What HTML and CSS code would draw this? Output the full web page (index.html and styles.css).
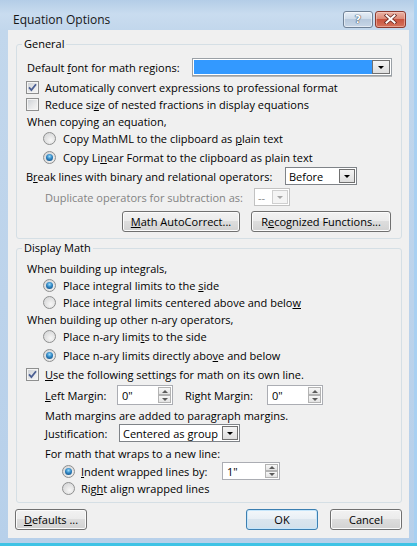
FILE: index.html
```html
<!DOCTYPE html>
<html>
<head>
<meta charset="utf-8">
<title>Equation Options</title>
<link rel="stylesheet" href="styles.css">
</head>
<body>
<div class="window">
  <div class="titlebar">
    <span class="title">Equation Options</span>
    <div class="caption">
      <span class="cbtn help"><span class="qmark">?</span></span>
      <span class="cbtn close">
        <svg width="13" height="10" viewBox="0 0 13 10"><path d="M2.5 1.5 L10.5 8.5 M10.5 1.5 L2.5 8.5" stroke="#6e2a22" stroke-width="3.6" stroke-linecap="square"/><path d="M2.5 1.5 L10.5 8.5 M10.5 1.5 L2.5 8.5" stroke="#ffffff" stroke-width="2" stroke-linecap="square"/></svg>
      </span>
    </div>
  </div>
  <div class="client">
    <fieldset class="group general">
      <legend>General</legend>
      <div class="row in-lbl mt6">
        <span class="lbl w-font">Default <u>f</u>ont for math regions:</span>
        <span class="combo font-combo"><span class="val hl"></span><span class="arrow"><i class="tri"></i></span></span>
      </div>
      <div class="row in-chk mt2">
        <span class="chk"><svg width="9" height="9" viewBox="0 0 9 9"><path d="M1 4.3 L3.4 7 L8 1.2" fill="none" stroke="#4b5f93" stroke-width="1.8"/></svg></span>
        <span>Automatically convert expressions to professional format</span>
      </div>
      <div class="row in-chk h17">
        <span class="chk"></span>
        <span>Reduce si<u>z</u>e of nested fractions in display equations</span>
      </div>
      <div class="row in-lbl h16"><span>When copying an equation,</span></div>
      <div class="row in-rad">
        <span class="rad"></span>
        <span>Copy MathML to the clipboard as <u>p</u>lain text</span>
      </div>
      <div class="row in-rad mt1">
        <span class="rad on"><i class="dot"></i></span>
        <span>Copy Li<u>n</u>ear Format to the clipboard as plain text</span>
      </div>
      <div class="row in-lbl2 mt1">
        <span class="lbl w-break">B<u>r</u>eak lines with binary and relational operators:</span>
        <span class="combo w-before"><span class="val">Before</span><span class="arrow"><i class="tri"></i></span></span>
      </div>
      <div class="row in-sub mt3 disabled">
        <span class="lbl w-dup">Duplicate operators for subtraction as:</span>
        <span class="combo w-dash off"><span class="val">--</span><span class="arrow"><i class="tri"></i></span></span>
      </div>
      <div class="row h21 mt5 btnrow">
        <span class="btn w-mac"><u>M</u>ath AutoCorrect...</span>
        <span class="btn w-rec">R<u>e</u>cognized Functions...</span>
      </div>
    </fieldset>

    <fieldset class="group display">
      <legend>Display Math</legend>
      <div class="row in-lbl h16 mt4"><span>When building up integrals,</span></div>
      <div class="row in-rad">
        <span class="rad on"><i class="dot"></i></span>
        <span>Place integral limits to the <u>s</u>ide</span>
      </div>
      <div class="row in-rad h17">
        <span class="rad"></span>
        <span>Place integral limits centered above and belo<u>w</u></span>
      </div>
      <div class="row in-lbl h16"><span>When building up other n-ary operators,</span></div>
      <div class="row in-rad">
        <span class="rad"></span>
        <span>Place n-ary limi<u>t</u>s to the side</span>
      </div>
      <div class="row in-rad mt1">
        <span class="rad on"><i class="dot"></i></span>
        <span>Place n-ary limits directly abo<u>v</u>e and below</span>
      </div>
      <div class="row in-chk mt1">
        <span class="chk"><svg width="9" height="9" viewBox="0 0 9 9"><path d="M1 4.3 L3.4 7 L8 1.2" fill="none" stroke="#4b5f93" stroke-width="1.8"/></svg></span>
        <span><u>U</u>se the following settings for math on its own line.</span>
      </div>
      <div class="row in-sub h20 mt2">
        <span class="lbl w-left"><u>L</u>eft Margin:</span>
        <span class="spin w-spin"><span class="val">0"</span><span class="spbtns"><span class="sp"><i class="up"></i></span><span class="sp"><i class="dn"></i></span></span></span>
        <span class="lbl w-right">Ri<u>g</u>ht Margin:</span>
        <span class="spin w-spin"><span class="val">0"</span><span class="spbtns"><span class="sp"><i class="up"></i></span><span class="sp"><i class="dn"></i></span></span></span>
      </div>
      <div class="row in-sub h16 mt2"><span>Math margins are added to paragraph margins.</span></div>
      <div class="row in-sub mt1">
        <span class="lbl w-just"><u>J</u>ustification:</span>
        <span class="combo w-group"><span class="val">Centered as group</span><span class="arrow"><i class="tri"></i></span></span>
      </div>
      <div class="row in-sub h16 mt3"><span>For math that wraps to a new line:</span></div>
      <div class="row in-rad2 mt1">
        <span class="rad on"><i class="dot"></i></span>
        <span class="lbl w-indent"><u>I</u>ndent wrapped lines by:</span>
        <span class="spin w-spin2 h18"><span class="val">1"</span><span class="spbtns"><span class="sp"><i class="up"></i></span><span class="sp"><i class="dn"></i></span></span></span>
      </div>
      <div class="row in-rad2 h17">
        <span class="rad"></span>
        <span>Rig<u>h</u>t align wrapped lines</span>
      </div>
    </fieldset>

    <div class="footer">
      <span class="btn w-foot"><u>D</u>efaults ...</span>
      <span class="btn w-foot default ok">OK</span>
      <span class="btn w-foot">Cancel</span>
    </div>
  </div>
  <div class="bottom-edge"></div>
</div>
</body>
</html>
```

FILE: styles.css
```css
html, body {
  margin: 0;
  padding: 0;
}

body {
  font-family: "Open Sans", "Noto Sans", sans-serif;
  font-size: 11px;
  color: #000;
  background: #b9d0e8;
}

u {
  text-decoration: underline;
  text-underline-offset: 1px;
}

.window {
  width: 417px;
  height: 546px;
  display: flex;
  flex-direction: column;
  background: linear-gradient(180deg, #b4cde7 0px, #c9dcef 14px, #c2d7ec 30px, #bcd3eb 300px, #b7d0ea 100%);
  box-shadow: inset -3px 0 0 #a8d0f2;
  overflow: hidden;
}

.titlebar {
  height: 30px;
  flex: none;
  box-sizing: border-box;
  padding: 8px 11px 0 13px;
  display: flex;
  align-items: center;
}

.title {
  font-size: 12px;
  color: #161616;
}

.caption {
  margin-left: auto;
  display: flex;
  gap: 2px;
}

.cbtn {
  height: 17px;
  box-sizing: border-box;
  border: 1px solid #6f8196;
  border-radius: 3px;
  display: flex;
  align-items: center;
  justify-content: center;
}

.help {
  width: 30px;
  background: linear-gradient(180deg, #e6eef7 0%, #cfdcea 45%, #b7c9dd 50%, #c7d6e7 100%);
  box-shadow: inset 0 0 0 1px rgba(255,255,255,0.5);
}

.qmark {
  font-family: "DejaVu Sans", sans-serif;
  font-weight: bold;
  font-size: 11px;
  line-height: 11px;
  color: #fff;
  text-shadow: 0 0 1px #3f4f63, 0 0 1px #3f4f63, 0 0 1px #3f4f63;
}

.close {
  width: 31px;
  border-color: #8b3a2f;
  background: linear-gradient(180deg, #eab3a5 0%, #dc8b78 45%, #c9543f 50%, #d5735c 100%);
  box-shadow: inset 0 0 0 1px rgba(255,220,210,0.45);
}

.client {
  margin: 0 8px;
  height: 508px;
  flex: none;
  background: #f0f0f0;
  display: flex;
  flex-direction: column;
}

.group {
  border: 1px solid #d5dfe5;
  border-radius: 3px;
  margin: 6px 7px 0 8px;
  padding: 0 0 6px 0;
  min-width: 0;
}

.group.display {
  margin-top: 1px;
  padding-bottom: 5px;
}

.group legend {
  padding: 0 2px;
  margin-left: 5px;
  line-height: 16px;
}

.row {
  display: flex;
  align-items: center;
  height: 18px;
  white-space: nowrap;
}

.h16 { height: 16px; }
.h17 { height: 17px; }
.h20 { height: 20px; }
.h21 { height: 21px; }

.mt1 { margin-top: 1px; }
.mt2 { margin-top: 2px; }
.mt3 { margin-top: 3px; }
.mt4 { margin-top: 4px; }
.mt5 { margin-top: 5px; }
.mt6 { margin-top: 6px; }

.in-lbl { padding-left: 10px; }
.in-lbl2 { padding-left: 9px; }
.in-chk { padding-left: 9px; }
.in-rad { padding-left: 26px; }
.in-sub { padding-left: 28px; }
.in-rad2 { padding-left: 45px; }

.lbl { flex: none; }
.w-font { width: 165px; }
.w-break { width: 259px; }
.w-dup { width: 209px; }
.w-left { width: 72px; }
.w-right { width: 82px; margin-left: 12px; }
.w-just { width: 74px; }
.w-indent { width: 141px; }

.disabled { color: #838383; }

/* checkbox */
.chk {
  width: 13px;
  height: 13px;
  flex: none;
  box-sizing: border-box;
  border: 1px solid #8e8f8f;
  background: linear-gradient(135deg, #cbcfd4 0%, #e9eaeb 60%, #f6f6f6 100%);
  box-shadow: inset 0 0 0 1px #f4f4f4;
  margin-right: 6px;
  display: flex;
  align-items: center;
  justify-content: center;
}

/* radio */
.rad {
  width: 13px;
  height: 13px;
  flex: none;
  box-sizing: border-box;
  border: 1px solid #8e8f8f;
  border-radius: 50%;
  background: radial-gradient(circle at 60% 65%, #f7f7f7 0%, #e4e4e4 45%, #cfd1d4 100%);
  margin-right: 7px;
  display: flex;
  align-items: center;
  justify-content: center;
}

.in-rad2 .rad { margin-right: 6px; }

.dot {
  display: block;
  width: 7px;
  height: 7px;
  border-radius: 50%;
  background: radial-gradient(circle at 50% 35%, #9bdcfb 0%, #2f86c4 45%, #0e4272 100%);
}

/* combo box */
.combo {
  display: flex;
  height: 18px;
  flex: none;
  box-sizing: border-box;
  border: 1px solid #7f8388;
  background: #fff;
}

.combo .val {
  flex: 1;
  padding-left: 3px;
  display: flex;
  align-items: center;
  overflow: hidden;
}

.combo .val.hl {
  background: #3399ff;
  margin: 1px 0 1px 1px;
}

.combo .arrow {
  width: 16px;
  flex: none;
  box-sizing: border-box;
  border: 1px solid #707070;
  margin: 1px 1px 1px 0;
  background: linear-gradient(180deg, #f4f4f4, #dedede);
  display: flex;
  align-items: center;
  justify-content: center;
}

.tri {
  display: block;
  width: 0;
  height: 0;
  border-left: 3px solid transparent;
  border-right: 3px solid transparent;
  border-top: 3px solid #000;
  margin-top: 1px;
}

.font-combo {
  width: 200px;
  border-color: #9aa0a6;
  box-shadow: 0 1px 0 #b8b8b8;
}

.font-combo .arrow { width: 18px; }

.w-before { width: 72px; }
.w-dash { width: 36px; }
.w-group { width: 121px; }

.combo.off {
  border-color: #c2c2c2;
}

.combo.off .val { color: #8d8d8d; }

.combo.off .arrow {
  border-color: #cfcfcf;
  background: #f4f4f4;
}

.combo.off .tri { border-top-color: #a6a6a6; }

/* spin box */
.spin {
  display: flex;
  height: 20px;
  flex: none;
  box-sizing: border-box;
  border: 1px solid #abadb3;
  background: #fff;
}

.spin.h18 { height: 18px; }

.spin .val {
  flex: 1;
  padding-left: 4px;
  display: flex;
  align-items: center;
}

.w-spin { width: 56px; }
.w-spin2 { width: 58px; }

.spbtns {
  width: 13px;
  flex: none;
  margin: 1px;
  display: flex;
  flex-direction: column;
}

.sp {
  flex: 1;
  box-sizing: border-box;
  border: 1px solid #b3b3b3;
  background: linear-gradient(180deg, #f7f7f7, #e3e3e3);
  display: flex;
  align-items: center;
  justify-content: center;
}

.up, .dn {
  display: block;
  width: 0;
  height: 0;
  border-left: 3px solid transparent;
  border-right: 3px solid transparent;
}

.up { border-bottom: 3px solid #5b5b5b; }
.dn { border-top: 3px solid #5b5b5b; }

/* buttons */
.btn {
  height: 21px;
  flex: none;
  box-sizing: border-box;
  border: 1px solid #707070;
  border-radius: 3px;
  background: linear-gradient(180deg, #f2f2f2 0%, #ebebeb 49%, #dddddd 50%, #d2d2d2 100%);
  box-shadow: inset 0 0 0 1px #fbfbfb;
  display: flex;
  align-items: center;
  justify-content: center;
}

.btnrow {
  justify-content: flex-end;
  gap: 11px;
  padding-right: 10px;
}

.w-mac { width: 118px; }
.w-rec { width: 140px; }

.footer {
  display: flex;
  gap: 12px;
  padding: 0 7px;
  margin-top: 6px;
}

.w-foot { width: 72px; }

.footer .ok { margin-left: auto; }

.btn.default {
  border-color: #3c7fb1;
  background: linear-gradient(180deg, #f3f7fa 0%, #e8eff5 49%, #dae5ee 50%, #d2e0eb 100%);
  box-shadow: inset 0 0 0 1px #c6e6fb;
}

.bottom-edge {
  margin-top: auto;
  height: 3px;
  flex: none;
  background: #3fc3e5;
}
```
